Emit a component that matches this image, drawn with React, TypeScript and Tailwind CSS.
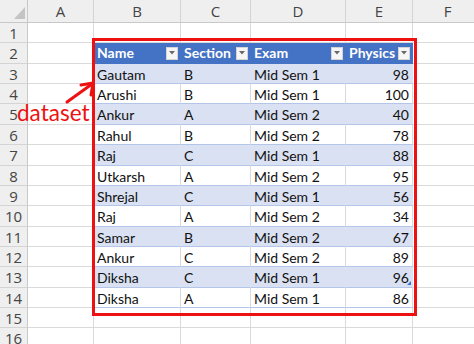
import React from 'react'

const cols = [
  { key: 'A', w: 'w-[66px]' },
  { key: 'B', w: 'w-[87px]' },
  { key: 'C', w: 'w-[70px]' },
  { key: 'D', w: 'w-[95px]' },
  { key: 'E', w: 'w-[67px]' },
  { key: 'F', w: 'w-[70px]' },
]

const rowHeights = [
  'h-[20px]', 'h-[21px]', 'h-[20px]', 'h-[20px]', 'h-[21px]', 'h-[20px]', 'h-[21px]', 'h-[20px]',
  'h-[20px]', 'h-[21px]', 'h-[20px]', 'h-[20px]', 'h-[21px]', 'h-[20px]', 'h-[20px]', 'h-[21px]',
]

const headers = ['Name', 'Section', 'Exam', 'Physics']

const data = [
  ['Gautam', 'B', 'Mid Sem 1', '98'],
  ['Arushi', 'B', 'Mid Sem 1', '100'],
  ['Ankur', 'A', 'Mid Sem 2', '40'],
  ['Rahul', 'B', 'Mid Sem 2', '78'],
  ['Raj', 'C', 'Mid Sem 1', '88'],
  ['Utkarsh', 'A', 'Mid Sem 2', '95'],
  ['Shrejal', 'C', 'Mid Sem 1', '56'],
  ['Raj', 'A', 'Mid Sem 2', '34'],
  ['Samar', 'B', 'Mid Sem 2', '67'],
  ['Ankur', 'C', 'Mid Sem 2', '89'],
  ['Diksha', 'C', 'Mid Sem 1', '96'],
  ['Diksha', 'A', 'Mid Sem 1', '86'],
]

function FilterButton() {
  return (
    <span className="flex items-center justify-center w-[12px] h-[13px] bg-[#f6f6f6] border border-[#d4d4d4] shrink-0">
      <svg width="6" height="4" viewBox="0 0 6 4">
        <polygon points="0,0 6,0 3,3.5" fill="#6a6a6a" />
      </svg>
    </span>
  )
}

function Cell({ row, col, w }: { row: number; col: number; w: string }) {
  // col: 0 = A ... 5 = F ; table sits in B..E, rows 2..14
  const inTable = col >= 1 && col <= 4 && row >= 2 && row <= 14
  if (!inTable) {
    return <div className={`${w} h-full shrink-0 border-r border-b border-[#dadada] bg-white`} />
  }
  const c = col - 1
  if (row === 2) {
    return (
      <div className={`${w} h-full shrink-0 flex items-center justify-between pl-[3px] pr-[3px] bg-[#4472c4] border-b border-[#4472c4] text-white font-bold`}>
        <span>{headers[c]}</span>
        <FilterButton />
      </div>
    )
  }
  const d = data[row - 3]
  const banded = row % 2 === 1
  const right = c === 3
  return (
    <div
      className={`${w} h-full shrink-0 relative flex items-center px-[3px] pt-[2px] border-b border-[#b4c6e7] text-[#111] ${
        banded ? 'bg-[#d9e1f2] border-r border-r-[#d9e1f2]' : 'bg-white border-r border-r-[#dadada]'
      } ${right ? 'justify-end' : ''}`}
    >
      {d[c]}
      {row === 13 && right && (
        <svg className="absolute right-[1px] bottom-[2px]" width="4" height="4" viewBox="0 0 4 4">
          <polygon points="4,0 4,4 0,4" fill="#4472c4" />
        </svg>
      )}
    </div>
  )
}

export default function App() {
  return (
    <div className="relative w-[474px] h-[344px] overflow-hidden bg-white text-[14px] font-['Lato',sans-serif] leading-none">
      {/* column letters */}
      <div className="flex h-[23px]">
        <div className="w-[28px] h-full shrink-0 relative bg-[#efefef] border-r border-b border-[#c8c8c8]">
          <svg className="absolute left-0 top-0" width="28" height="23" viewBox="0 0 28 23">
            <polygon points="25,7 25,19 14,19" fill="#c4c4c4" />
          </svg>
        </div>
        {cols.map((c) => (
          <div
            key={c.key}
            className={`${c.w} h-full shrink-0 flex items-center justify-center pt-[1px] bg-[#efefef] border-r border-r-[#d4d4d4] border-b border-b-[#c8c8c8] text-[15px] text-[#444] font-['Open_Sans',sans-serif]`}
          >
            {c.key}
          </div>
        ))}
      </div>

      {/* rows */}
      {rowHeights.map((h, i) => {
        const row = i + 1
        return (
          <div key={row} className={`flex ${h}`}>
            <div className="w-[28px] h-full shrink-0 flex items-center justify-center pt-[1px] bg-[#efefef] border-r border-r-[#c8c8c8] border-b border-b-[#d4d4d4] text-[15px] text-[#444] font-['Open_Sans',sans-serif]">
              {row}
            </div>
            {cols.map((c, ci) => (
              <Cell key={c.key} row={row} col={ci} w={c.w} />
            ))}
          </div>
        )
      })}

      {/* red outline round the table */}
      <div className="absolute left-[92px] top-[38px] w-[325px] h-[278px] border-[3px] border-[#ee1111]" />

      {/* annotation */}
      <svg className="absolute left-0 top-0" width="120" height="120" viewBox="0 0 120 120">
        <path d="M67 102 L92 84" stroke="#ee1111" strokeWidth="3" strokeLinecap="round" fill="none" />
        <path d="M81 85 L93 83 L91 95" stroke="#ee1111" strokeWidth="3" strokeLinecap="round" strokeLinejoin="round" fill="none" />
      </svg>
      <div className="absolute left-[17px] top-[102px] text-[22.5px] text-[#ee1111] font-['Lato',sans-serif] leading-none">
        dataset
      </div>
    </div>
  )
}
